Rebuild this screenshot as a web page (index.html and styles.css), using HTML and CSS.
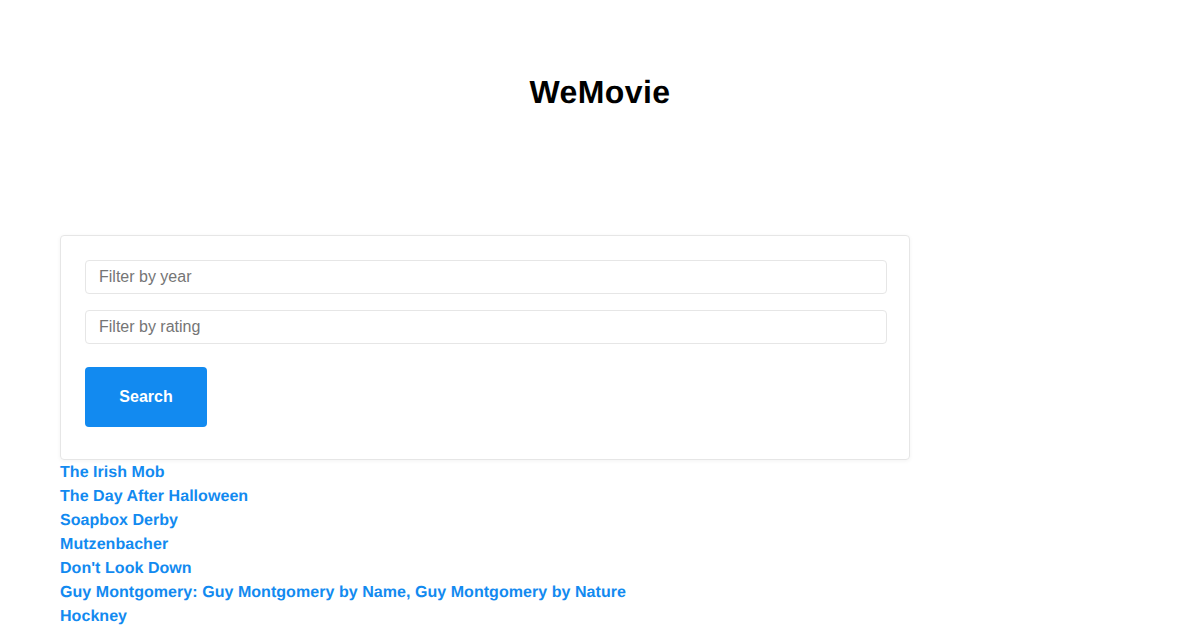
FILE: index.html
```html
<!DOCTYPE html>
<html lang="en">
<head>
    <meta charset="UTF-8">
    <meta name="viewport" content="width=device-width, initial-scale=1.0">
    <title>WeMovie</title>
    <link rel="stylesheet" href="styles.css">
</head>
<body>
    <header class="header">
        <h1>WeMovie</h1>
    </header>

    <main class="content">
        <form class="filter-card" onsubmit="return false">
            <input type="text" class="filter-input" placeholder="Filter by year">
            <input type="text" class="filter-input" placeholder="Filter by rating">
            <button type="submit" class="search-btn">Search</button>
        </form>

        <ul class="movie-list">
            <li><a href="#">The Irish Mob</a></li>
            <li><a href="#">The Day After Halloween</a></li>
            <li><a href="#">Soapbox Derby</a></li>
            <li><a href="#">Mutzenbacher</a></li>
            <li><a href="#">Don't Look Down</a></li>
            <li><a href="#">Guy Montgomery: Guy Montgomery by Name, Guy Montgomery by Nature</a></li>
            <li><a href="#">Hockney</a></li>
        </ul>
    </main>
</body>
</html>
```

FILE: styles.css
```css
body {
    font-family: "Liberation Sans", Arial, sans-serif;
    margin: 0;
    padding: 0;
    background-color: #fff;
    color: #000;
    text-rendering: geometricPrecision;
}
.header {
    padding-top: 74px;
    text-align: center;
}
.header h1 {
    margin: 0;
    font-size: 32px;
    line-height: 37px;
    font-weight: bold;
    letter-spacing: 0.4px;
}
.content {
    margin-top: 124px;
    padding: 0 60px;
}
.filter-card {
    width: 850px;
    box-sizing: border-box;
    padding: 24px 22px 32px 24px;
    border: 1px solid #e6e6e6;
    border-radius: 4px;
    box-shadow: 0 1px 4px rgba(0, 0, 0, 0.05);
    display: flex;
    flex-direction: column;
    align-items: flex-start;
}
.filter-input {
    width: 100%;
    height: 34px;
    box-sizing: border-box;
    margin-bottom: 16px;
    padding: 0 13px;
    font-family: inherit;
    font-size: 16px;
    border: 1px solid #e6e6e6;
    border-radius: 4px;
    outline: none;
}
.filter-input::placeholder {
    color: #757575;
}
.filter-input:last-of-type {
    margin-bottom: 23px;
}
.search-btn {
    width: 122px;
    height: 60px;
    background-color: #128af0;
    color: #fff;
    border: none;
    border-radius: 4px;
    font-family: inherit;
    font-size: 16px;
    font-weight: bold;
    cursor: pointer;
}
.movie-list {
    list-style: none;
    margin: 1px 0 0;
    padding: 0;
}
.movie-list li {
    line-height: 24px;
    font-size: 16px;
    font-weight: bold;
    letter-spacing: 0.05px;
}
.movie-list a {
    color: #128af0;
    text-decoration: none;
}
```
